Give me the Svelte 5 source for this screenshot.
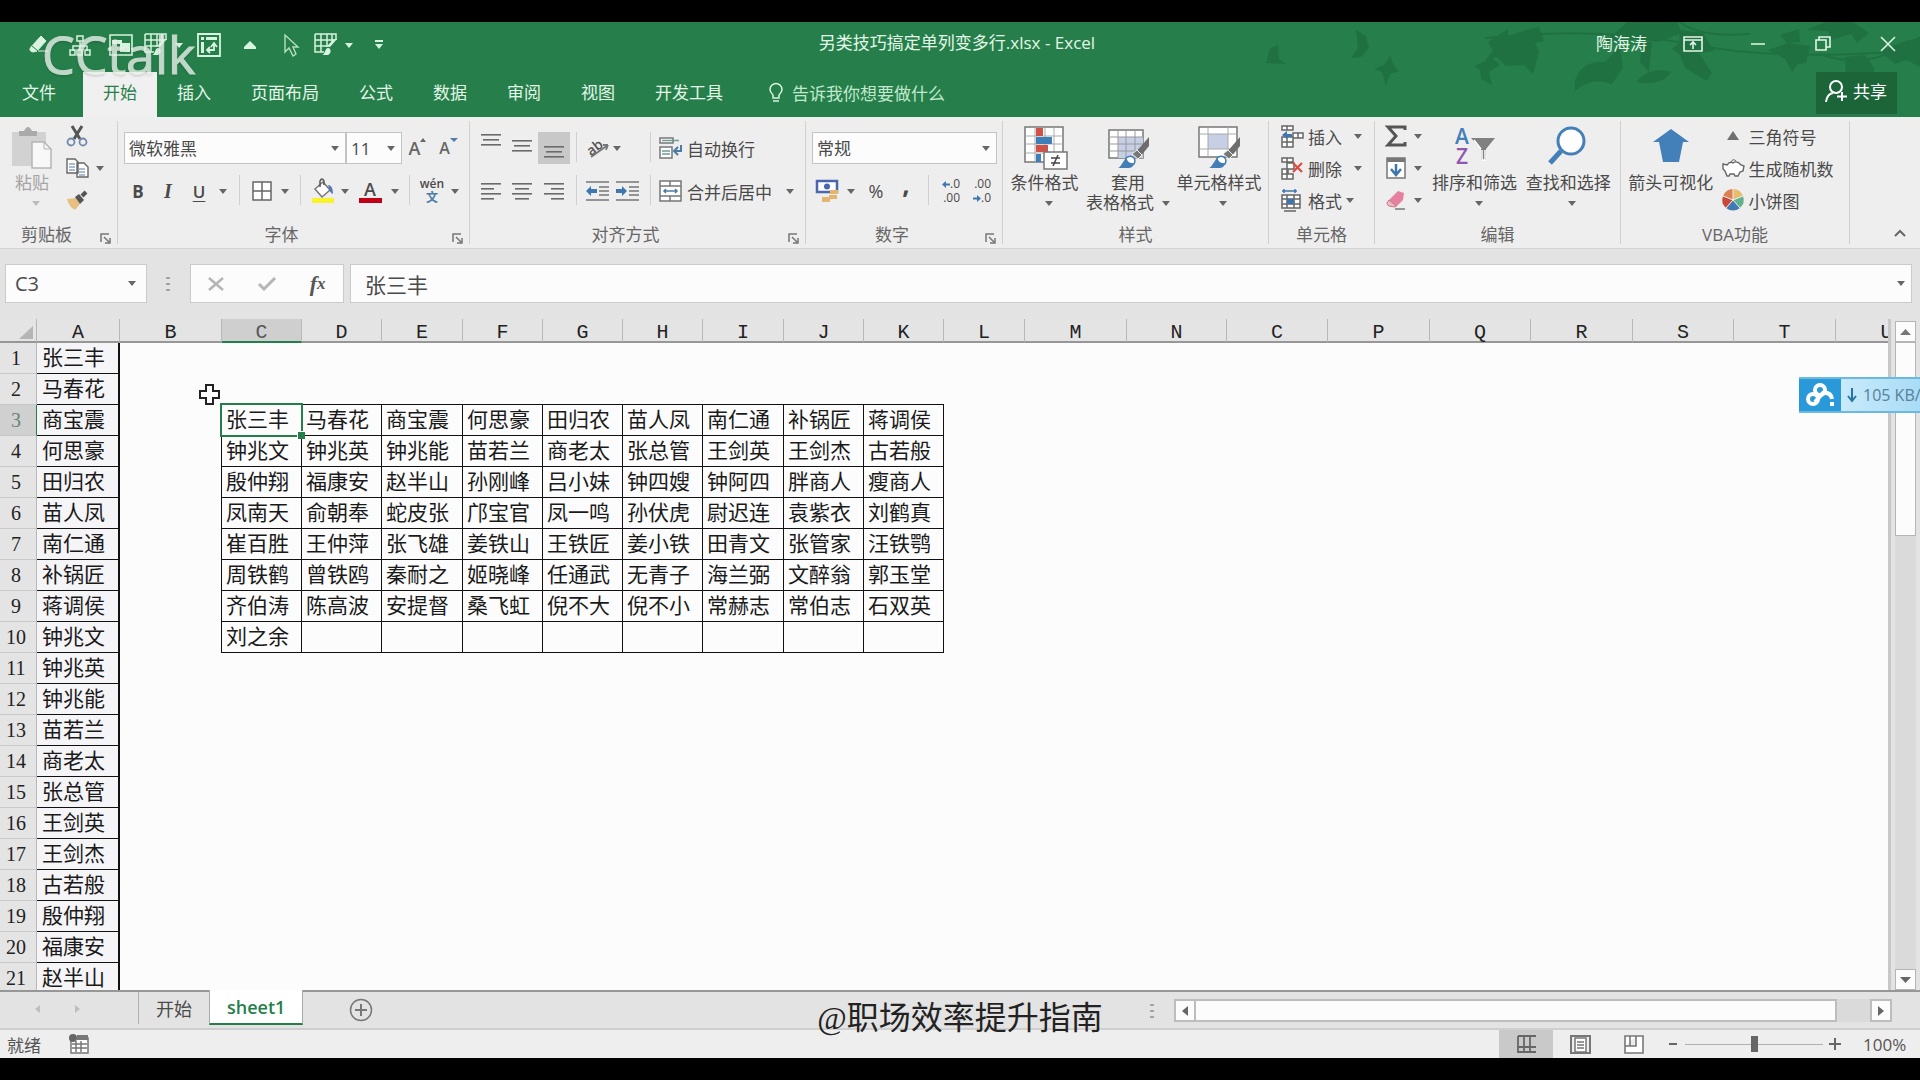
<script>
  const names = [
    '张三丰', '马春花', '商宝震', '何思豪', '田归农', '苗人凤', '南仁通', '补锅匠', '蒋调侯',
    '钟兆文', '钟兆英', '钟兆能', '苗若兰', '商老太', '张总管', '王剑英', '王剑杰', '古若般',
    '殷仲翔', '福康安', '赵半山', '孙刚峰', '吕小妹', '钟四嫂', '钟阿四', '胖商人', '瘦商人',
    '凤南天', '俞朝奉', '蛇皮张', '邝宝官', '凤一鸣', '孙伏虎', '尉迟连', '袁紫衣', '刘鹤真',
    '崔百胜', '王仲萍', '张飞雄', '姜铁山', '王铁匠', '姜小铁', '田青文', '张管家', '汪铁鹗',
    '周铁鹤', '曾铁鸥', '秦耐之', '姬晓峰', '任通武', '无青子', '海兰弼', '文醉翁', '郭玉堂',
    '齐伯涛', '陈高波', '安提督', '桑飞虹', '倪不大', '倪不小', '常赫志', '常伯志', '石双英',
    '刘之余'
  ];

  const columns = [
    { label: 'A', width: 83 }, { label: 'B', width: 102 }, { label: 'C', width: 80 },
    { label: 'D', width: 80 }, { label: 'E', width: 81 }, { label: 'F', width: 80 },
    { label: 'G', width: 80 }, { label: 'H', width: 80 }, { label: 'I', width: 81 },
    { label: 'J', width: 80 }, { label: 'K', width: 80 }, { label: 'L', width: 81 },
    { label: 'M', width: 102 }, { label: 'N', width: 100 }, { label: 'C', width: 101 },
    { label: 'P', width: 102 }, { label: 'Q', width: 101 }, { label: 'R', width: 102 },
    { label: 'S', width: 101 }, { label: 'T', width: 102 }, { label: 'U', width: 102 }
  ];

  const rowCount = 21;
  const blockTop = 2;
  const blockLeft = 2;
  const blockCols = 9;
  const blockRows = 8;

  function inBlock(row, col) {
    return row >= blockTop && row < blockTop + blockRows && col >= blockLeft && col < blockLeft + blockCols;
  }

  function cellValue(row, col) {
    if (col === 0) return names[row];
    if (!inBlock(row, col)) return '';
    return names[(row - blockTop) * blockCols + (col - blockLeft)] || '';
  }

  let selected = $state({ row: 2, col: 2 });
  let zoom = $state(100);
  let activeTab = $state('开始');

  const tabs = ['开始', '插入', '页面布局', '公式', '数据', '审阅', '视图', '开发工具'];

  let cellName = $derived(columns[selected.col].label + (selected.row + 1));
  let cellText = $derived(cellValue(selected.row, selected.col));
</script>

{#snippet caret()}
  <svg class="caret" width="8" height="5" viewBox="0 0 8 5"><path d="M0 0h8L4 5z" fill="#666" /></svg>
{/snippet}

{#snippet launcher()}
  <button class="launcher" aria-label="更多选项">
    <svg width="11" height="11" viewBox="0 0 11 11">
      <path d="M1 9V1h8M4 4l5 5M10 5v5H5" fill="none" stroke="#777" stroke-width="1.5" />
    </svg>
  </button>
{/snippet}

{#snippet lines(widths, align)}
  <svg width="20" height="18" viewBox="0 0 20 18">
    {#each widths as w, i}
      {@const x = align === 'left' ? 0 : align === 'right' ? 20 - w : (20 - w) / 2}
      <rect {x} y={1 + i * 5} width={w} height="1.6" fill="#6b6b6b" />
    {/each}
  </svg>
{/snippet}

{#snippet gridBrush(color)}
  <svg width="24" height="24" viewBox="0 0 24 24">
    <path d="M1 1h21v6M1 1v18h9M1 7h20M1 13h14M7 1v18M13 1v13M18 1v8" fill="none" stroke={color} stroke-width="1.5" />
    <path d="M23 6l-7 8-3-1 7-7zM8 22c3 0 3-7 6-7s4 5 0 7z" fill={color} />
  </svg>
{/snippet}

{#snippet bigBrush()}
  <path d="M43 11v9L34 31l-5-4z" fill="#6d6d6d" />
  <path d="M31 24l5 5-4 4-6-5z" fill="#777" stroke="#f0f0f0" />
  <path d="M12 42c4-1 6-12 13-12 7 0 4 12-2 12z" fill="#437db5" />
  <path d="M20 32c5-4 11 0 8 6-3 0-8-1-8-6z" fill="#fff" stroke="#437db5" stroke-width="1.5" />
{/snippet}

<div class="window">
  <header>
    <svg class="branches" viewBox="0 0 660 95" preserveAspectRatio="xMaxYMin meet" aria-hidden="true">
      <path d="M225 16Q340 4 430 22T660 28M420 0Q440 16 490 12M560 32Q610 50 660 15" fill="none" stroke="#1f6f41" stroke-width="2" />
      <path d="M10 26l8-3 1 14 7 5-20-1zM96 8l10 6 3 12-8 9-10 1 7-10zM130 34l4 10 5 5-9 3-4 12-4-14-8-3 10-4z" />
      <path d="M215 44l10-5 5-5 10 9-11 7 3 13-11-6-1-9zM228 20l20-13 0 7 18-6 13-3 5 14-9 2 4 9-6 22-9-9-18 1-9-9-12 4 8-10z" />
      <path d="M345 20l22-20h50l5 11-24 9-22-3zM315 58q8-20 30-18l15-16 3 22-11 16q-20-8-37 7zM376 60q15-17 35-10-8 14-35 10zM382 20h10l-3 30-9-10zM420 8l23 3 11 18-15 2 13 20-5 8-22-13-5-13-8-6 7-6z" />
      <path d="M508 28l20-7 22 3-4 17-8 1-6 8-7-13zM520 13l19-6 1 13-13 1zM546 8l20-8 27 0 16 11-12 10-6-9-20 6-3-9zM585 35l20-2 10 14-11 18-9-9-9 4zM620 29l28-11 12-1v28l-13-7-12 4z" />
    </svg>

    <div class="title-bar">
      <div class="quick">
        <button aria-label="橡皮擦">
          <svg width="22" height="22" viewBox="0 0 22 22"><path d="M3 13L13 2l5 5-9 10zM3 13q-3 4 2 5l4-1M10 17h10" fill="#d8f3df" stroke="#d8f3df" /><path d="M4 12l6 5" stroke="#267f4a" /></svg>
        </button>
        <button aria-label="层次结构">
          <svg width="24" height="24" viewBox="0 0 24 24"><path d="M9 3h6v5H9zM12 8v8M5 18v-5h14v5M2 17h5v5H2zM9 17h5v5H9zM17 17h5v5h-5z" fill="none" stroke="#d8f3df" stroke-width="1.5" /></svg>
        </button>
        <button aria-label="窗体">
          <svg width="24" height="24" viewBox="0 0 24 24"><path d="M1 2h22v20H1z" fill="none" stroke="#d8f3df" stroke-width="1.6" /><path d="M11 10h10v9H11zM3 7h10v4H3z" fill="#d8f3df" /></svg>
        </button>
        <button class="narrow" aria-label="表格样式">{@render gridBrush('#d8f3df')}</button>
        <button class="thin" aria-label="更多表格样式"><svg width="8" height="5" viewBox="0 0 8 5"><path d="M0 0h8L4 5z" fill="#d8f3df" /></svg></button>
        <button aria-label="转置">
          <svg width="24" height="24" viewBox="0 0 24 24"><path d="M1 1h22v22H1z" fill="none" stroke="#d8f3df" stroke-width="1.8" /><path d="M4 4h3v3H4zM9 4h11v3H9zM4 9h3v11H4z" fill="#d8f3df" /><path d="M11 17h6v-6M14 14l3-4 3 4M13 14l-3 3 3 3" fill="none" stroke="#d8f3df" stroke-width="1.8" /></svg>
        </button>
        <button aria-label="三角符号"><svg width="14" height="10" viewBox="0 0 14 10"><path d="M7 1l6 6v2H1V7z" fill="#d8f3df" /></svg></button>
        <button aria-label="选择"><svg width="16" height="24" viewBox="0 0 16 24"><path d="M2 2v17l4-4 4 8 3-2-3-7h5z" fill="none" stroke="#b5dfc2" stroke-width="1.4" /></svg></button>
        <button class="narrow" aria-label="表格刷">{@render gridBrush('#d8f3df')}</button>
        <button class="thin" aria-label="更多表格刷"><svg width="8" height="5" viewBox="0 0 8 5"><path d="M0 0h8L4 5z" fill="#d8f3df" /></svg></button>
        <button aria-label="自定义快速访问工具栏"><svg width="8" height="10" viewBox="0 0 8 10"><path d="M0 0h8v2H0zM0 4h8L4 9z" fill="#d8f3df" /></svg></button>
      </div>
      <h1>另类技巧搞定单列变多行.xlsx - Excel</h1>
      <div class="window-controls">
        <span class="user">陶海涛</span>
        <button aria-label="功能区显示选项"><svg width="20" height="16" viewBox="0 0 20 16"><path d="M1 1h18v14H1zM1 4h18M10 13V7M7 9l3-3 3 3" fill="none" stroke="#e4f6e8" stroke-width="1.6" /></svg></button>
        <button aria-label="最小化"><svg width="16" height="16" viewBox="0 0 16 16"><path d="M1 8h14" stroke="#e4f6e8" stroke-width="1.5" /></svg></button>
        <button aria-label="还原"><svg width="16" height="16" viewBox="0 0 16 16"><path d="M1 4h10v10H1zM4 4V1h11v10h-4" fill="none" stroke="#e4f6e8" stroke-width="1.6" /></svg></button>
        <button aria-label="关闭"><svg width="16" height="16" viewBox="0 0 16 16"><path d="M1 1l14 14M15 1L1 15" stroke="#e4f6e8" stroke-width="1.5" /></svg></button>
      </div>
      <span class="brand">CCtalk</span>
    </div>

    <nav>
      <button class="tab file">文件</button>
      {#each tabs as tab}
        <button class="tab" class:active={activeTab === tab} onclick={() => (activeTab = tab)}>{tab}</button>
      {/each}
      <button class="tell-me">
        <svg width="14" height="20" viewBox="0 0 14 20"><path d="M4 15v-3Q1 9 1 6.500a6 6 0 0 1 12 0Q13 9 10 12v3zM4 18h6" fill="none" stroke="#d8f3df" stroke-width="1.5" /></svg>
        告诉我你想要做什么
      </button>
      <button class="share">
        <svg width="23" height="24" viewBox="0 0 23 24"><circle cx="11" cy="8" r="6" fill="none" stroke="#fff" stroke-width="2" /><path d="M1 23q1-8 7-9M17 13v9M12 17.500h10" fill="none" stroke="#fff" stroke-width="2" /></svg>
        共享
      </button>
    </nav>
  </header>

  <div class="ribbon">
    <section class="group">
      <div class="body clipboard">
        <button class="big disabled">
          <svg width="42" height="44" viewBox="0 0 42 44">
            <path d="M1 6h34v34H1z" fill="#d2d2d2" /><path d="M8 10V5h5q4-8 8 0h5v5z" fill="#aaa" />
            <path d="M21 16h12l7 7v19H21z" fill="#f8f8f8" stroke="#b5b5b5" stroke-width="1.5" /><path d="M33 16v7h7" fill="none" stroke="#b5b5b5" />
          </svg>
          <span>粘贴</span>
          <svg class="caret" width="8" height="5" viewBox="0 0 8 5"><path d="M0 0h8L4 5z" fill="#bbb" /></svg>
        </button>
        <div class="stack">
          <button aria-label="剪切"><svg width="22" height="22" viewBox="0 0 22 22"><path d="M6 1l8 13M16 1L8 14" stroke="#555" stroke-width="3" /><circle cx="5" cy="17" r="3.500" fill="none" stroke="#7089ac" stroke-width="1.8" /><circle cx="17" cy="17" r="3.500" fill="none" stroke="#7089ac" stroke-width="1.8" /></svg></button>
          <button aria-label="复制"><svg width="23" height="20" viewBox="0 0 23 20"><path d="M1 1h8l3 3v11H1zM11 5h7l4 4v10H11z" fill="#fff" stroke="#666" stroke-width="1.4" /><path d="M3 6h6M3 9h6M3 12h6M13 11h6M13 14h6M13 17h6" stroke="#4d7ba8" /></svg>{@render caret()}</button>
          <button aria-label="格式刷"><svg width="22" height="20" viewBox="0 0 22 20"><path d="M1 9l9-1 4 6-5 6q-6-3-8-11z" fill="#e7bf80" /><path d="M9 7l4-3 5 6-4 4z" fill="#555" /><path d="M16 6l4-4" stroke="#555" stroke-width="4" /></svg></button>
        </div>
      </div>
      <footer><span>剪贴板</span>{@render launcher()}</footer>
    </section>

    <section class="group">
      <div class="body rows">
        <div class="row combos">
          <span class="combo"><select aria-label="字体"><option>微软雅黑</option></select>{@render caret()}</span>
          <span class="combo small"><select aria-label="字号"><option>11</option></select>{@render caret()}</span>
          <button class="glyph-a" aria-label="增大字号">A<svg width="6" height="4" viewBox="0 0 6 4"><path d="M0 4h6L3 0z" fill="#666" /></svg></button>
          <button class="glyph-a less" aria-label="减小字号">A<svg width="8" height="4" viewBox="0 0 8 4"><path d="M0 0h8L4 4z" fill="#4f7fa3" /></svg></button>
        </div>
        <div class="row font-row">
          <button class="bold">B</button>
          <button class="italic">I</button>
          <button class="underline">U</button>
          <button aria-label="下划线样式">{@render caret()}</button>
          <i class="divider"></i>
          <button aria-label="边框"><svg width="20" height="20" viewBox="0 0 20 20"><path d="M1 1h18v18H1zM1 10h18M10 1v18" fill="#fff" stroke="#666" stroke-width="1.5" /></svg></button>
          <button aria-label="更多边框">{@render caret()}</button>
          <i class="divider"></i>
          <button aria-label="填充颜色"><svg width="24" height="26" viewBox="0 0 24 26"><path d="M4 11l8-7 7 8-8 7z" fill="#fff" stroke="#777" stroke-width="1.500" /><path d="M9 9V3q2-4 4 0v4" fill="none" stroke="#555" stroke-width="1.500" /><path d="M17 7q5 0 5 9-4-2-4-6z" fill="#5579b5" /><path d="M1 20h22v5H1z" fill="#f8f32b" /></svg></button>
          <button aria-label="更多填充颜色">{@render caret()}</button>
          <button aria-label="字体颜色" class="font-color">A</button>
          <button aria-label="更多字体颜色">{@render caret()}</button>
          <i class="divider"></i>
          <button class="pinyin" aria-label="拼音"><small>wén</small><b>文</b></button>
          <button aria-label="更多拼音选项">{@render caret()}</button>
        </div>
      </div>
      <footer><span>字体</span>{@render launcher()}</footer>
    </section>

    <section class="group">
      <div class="body rows">
        <div class="row align-row">
          <button class="raise" aria-label="顶端对齐">{@render lines([20, 16, 20], 'center')}</button>
          <button aria-label="垂直居中">{@render lines([20, 16, 20], 'center')}</button>
          <button class="pressed" aria-label="底端对齐">{@render lines([20, 16, 20], 'center')}</button>
          <i class="divider"></i>
          <button aria-label="方向"><svg width="24" height="22" viewBox="0 0 24 22"><path d="M5 20L22 8M22 8l-5 0M22 8l-2 5" fill="none" stroke="#777" stroke-width="1.800" /><text x="1" y="16" class="orient" transform="rotate(-38 8 12)">ab</text></svg></button>
          <button class="from-start" aria-label="更多方向">{@render caret()}</button>
          <i class="divider"></i>
          <button class="labelled">
            <svg width="24" height="22" viewBox="0 0 24 22"><path d="M1 1h13v5H1zM1 10h12v11H1z" fill="#fff" stroke="#777" stroke-width="1.5" /><path d="M3 3.500h17M3 14h8M3 17h8" stroke="#6d9a9a" stroke-width="1.5" /><path d="M22 8v6h-6M19 10l-4 4 4 4" fill="none" stroke="#4d7ba8" stroke-width="2" /></svg>
            自动换行
          </button>
        </div>
        <div class="row align-row">
          <button aria-label="左对齐">{@render lines([20, 13, 20, 13], 'left')}</button>
          <button aria-label="居中">{@render lines([20, 14, 20, 14], 'center')}</button>
          <button aria-label="右对齐">{@render lines([20, 13, 20, 13], 'right')}</button>
          <i class="divider"></i>
          <button aria-label="减少缩进"><svg width="23" height="20" viewBox="0 0 23 20"><path d="M0 1h23M13 6h10M13 10h10M13 14h10M0 19h23" stroke="#777" stroke-width="1.5" /><path d="M0 10l5-5v3h6v4H5v3z" fill="#3f76ad" /></svg></button>
          <button aria-label="增加缩进"><svg width="23" height="20" viewBox="0 0 23 20"><path d="M0 1h23M13 6h10M13 10h10M13 14h10M0 19h23" stroke="#777" stroke-width="1.5" /><path d="M11 10L6 5v3H0v4h6v3z" fill="#3f76ad" /></svg></button>
          <i class="divider"></i>
          <button class="labelled">
            <svg width="24" height="22" viewBox="0 0 24 22"><path d="M1 1h21v20H1zM1 6h21M1 16h21M11 1v5M11 16v5" fill="#fff" stroke="#777" stroke-width="1.5" /><path d="M5 11h13M7 9l-2 2 2 2M16 9l2 2-2 2" fill="none" stroke="#4d7ba8" stroke-width="1.5" /></svg>
            合并后居中
            {@render caret()}
          </button>
        </div>
      </div>
      <footer><span>对齐方式</span>{@render launcher()}</footer>
    </section>

    <section class="group">
      <div class="body rows">
        <div class="row combos">
          <span class="combo"><select aria-label="数字格式"><option>常规</option></select>{@render caret()}</span>
        </div>
        <div class="row number-row">
          <button aria-label="会计数字格式"><svg width="24" height="24" viewBox="0 0 24 24"><path d="M2 2h20v11H2z" fill="#fff" stroke="#4867ac" stroke-width="2.500" /><circle cx="12" cy="7.500" r="3" fill="#4867ac" /><path d="M15 11h8v4h-8zM14 16h8v4h-8zM7 18h8v5H7z" fill="#e5b56f" /></svg></button>
          <button aria-label="更多会计格式">{@render caret()}</button>
          <button class="percent">%</button>
          <button class="comma" aria-label="千位分隔样式">,</button>
          <i class="divider"></i>
          <button class="decimals" aria-label="增加小数位数"><span><svg width="8" height="7" viewBox="0 0 8 7"><path d="M0 3.500L4 0v2.500h4v2H4V7z" fill="#3f76ad" /></svg>.0</span><span>.00</span></button>
          <button class="decimals" aria-label="减少小数位数"><span>.00</span><span><svg width="8" height="7" viewBox="0 0 8 7"><path d="M8 3.500L4 0v2.500H0v2h4V7z" fill="#3f76ad" /></svg>.0</span></button>
        </div>
      </div>
      <footer><span>数字</span>{@render launcher()}</footer>
    </section>

    <section class="group">
      <div class="body styles">
        <button class="big">
          <svg width="44" height="44" viewBox="0 0 44 44">
            <path d="M2 1h38v35H2z" fill="#fff" stroke="#777" stroke-width="1.5" /><path d="M2 10h38M2 18h38M2 27h38M12 1v35M22 1v35M31 1v35" stroke="#aaa" />
            <path d="M13 2h7v8h-7zM13 19h12v7H13z" fill="#cf5148" /><path d="M13 11h16v7H13zM13 28h5v8h-5z" fill="#3f7fb8" />
            <path d="M21 26h23v17H21z" fill="#fff" stroke="#777" stroke-width="1.5" /><path d="M28 32h9M28 37h9M35 29l-5 11" stroke="#444" stroke-width="1.5" />
          </svg>
          <span>条件格式</span>
          {@render caret()}
        </button>
        <button class="big">
          <svg width="44" height="44" viewBox="0 0 44 44">
            <path d="M3 4h34v28H3z" fill="#fff" stroke="#777" stroke-width="1.5" /><path d="M12 11h25v21H12z" fill="#c6cfe6" /><path d="M3 11h34M3 18h34M3 25h34M12 4v28M20 4v28M29 4v28" stroke="#999" />
            {@render bigBrush()}
          </svg>
          <span>套用</span>
          <span class="second">表格格式 {@render caret()}</span>
        </button>
        <button class="big">
          <svg width="44" height="44" viewBox="0 0 44 44">
            <path d="M2 1h38v30H2z" fill="#fff" stroke="#777" stroke-width="1.5" /><path d="M11 8h20v15H11z" fill="#c6cfe6" /><path d="M2 8h38M2 23h38M11 1v30M31 1v30" stroke="#aaa" />
            {@render bigBrush()}
          </svg>
          <span>单元格样式</span>
          {@render caret()}
        </button>
      </div>
      <footer><span>样式</span></footer>
    </section>

    <section class="group">
      <div class="body stack cells">
        <button>
          <svg width="23" height="23" viewBox="0 0 23 23"><path d="M1 1h11v4H1zM1 17h11v5H1zM1 17v-5h11v5M6 1v4M6 12v10M12 8h10v5H12zM17 8v5" fill="#fff" stroke="#666" stroke-width="1.500" /><path d="M1 10l5-4v3h5v3H6v2z" fill="#3f76ad" /></svg>
          <span>插入</span>{@render caret()}
        </button>
        <button>
          <svg width="23" height="23" viewBox="0 0 23 23"><path d="M1 1h11v4H1zM1 17h11v5H1zM1 17v-5h6v5M6 1v4M6 12v10M6 6h7v6H6z" fill="#fff" stroke="#666" stroke-width="1.500" /><path d="M12 6l9 9M21 6l-9 9" stroke="#dc4c3f" stroke-width="2.200" /></svg>
          <span>删除</span>{@render caret()}
        </button>
        <button class="tight">
          <svg width="23" height="23" viewBox="0 0 23 23"><path d="M1 6h18v13H1zM1 10h18M1 15h18M6 6v13M13 6v13M3 22h12" fill="#fff" stroke="#666" stroke-width="1.500" /><path d="M6 10h7v5H6z" fill="#3f76ad" /><path d="M1 2h15M3 0v4M14 0v4" stroke="#3f76ad" stroke-width="1.500" /></svg>
          <span>格式</span>{@render caret()}
        </button>
      </div>
      <footer><span>单元格</span></footer>
    </section>

    <section class="group">
      <div class="body editing">
        <div class="stack">
          <button aria-label="自动求和"><svg width="20" height="22" viewBox="0 0 20 22"><path d="M19 5V2H2l8 9-8 9h17v-3" fill="none" stroke="#555" stroke-width="3" /></svg>{@render caret()}</button>
          <button aria-label="填充"><svg width="20" height="22" viewBox="0 0 20 22"><path d="M1 1h18v20H1z" fill="#fff" stroke="#777" stroke-width="1.5" /><path d="M1 1h18v4H1z" fill="#777" /><path d="M10 7v10M5 12l5 6 5-6" fill="none" stroke="#3f76ad" stroke-width="2.5" /></svg>{@render caret()}</button>
          <button aria-label="清除"><svg width="20" height="20" viewBox="0 0 20 20"><path d="M3 10L12 1l6 2-1 7-7 7z" fill="#e5809f" /><path d="M3 10q-4 4 0 6l6 1 1-1z" fill="#f0b8c8" stroke="#c77" /><path d="M9 19h10" stroke="#777" stroke-width="1.5" /></svg>{@render caret()}</button>
        </div>
        <button class="big">
          <svg width="44" height="44" viewBox="0 0 44 44">
            <text x="2" y="18" class="sort-a">A</text><text x="3" y="38" class="sort-z">Z</text>
            <path d="M18 12h24l-9 11v11h-5V23z" fill="#808080" /><path d="M28 23l-7-9M29 24v10h3V24" fill="none" stroke="#fff" stroke-width="1.500" />
          </svg>
          <span>排序和筛选</span>
          {@render caret()}
        </button>
        <button class="big">
          <svg width="44" height="44" viewBox="0 0 44 44"><circle cx="25" cy="15" r="13" fill="#fff" stroke="#4380b8" stroke-width="3" /><path d="M15 25L4 37" stroke="#4380b8" stroke-width="5" /></svg>
          <span>查找和选择</span>
          {@render caret()}
        </button>
      </div>
      <footer><span>编辑</span></footer>
    </section>

    <section class="group">
      <div class="body vba">
        <button class="big">
          <svg width="44" height="44" viewBox="0 0 44 44"><path d="M22 3l18 13h-6l-4 20H14l-4-20H4z" fill="#437fb8" /></svg>
          <span>箭头可视化</span>
        </button>
        <div class="stack">
          <button><svg width="24" height="22" viewBox="0 0 24 22"><path d="M12 6l6 9H6z" fill="#707070" /></svg><span>三角符号</span></button>
          <button><svg width="24" height="22" viewBox="0 0 24 22"><path d="M2 7l4 1q3-4 6-2 4-3 8 2l3 1-1 5-3 1-2 4h-3l-1-2H9l-1 2H6l-2-5-2-2z" fill="#fff" stroke="#666" stroke-width="1.400" /><path d="M10 5q2-4 5-1" fill="none" stroke="#666" /></svg><span>生成随机数</span></button>
          <button><svg width="24" height="22" viewBox="0 0 24 22"><path d="M12 11V0a11 11 0 0 1 10 7z" fill="#e9bd6d" /><path d="M12 11l10-4a11 11 0 0 1-3 12z" fill="#61b28c" /><path d="M12 11l7 8q-7 5-14 0z" fill="#4179b2" /><path d="M12 11l-7 8A11 11 0 0 1 2 7z" fill="#c9483a" /><path d="M12 11L2 7q3-7 10-7z" fill="#db8055" /><path d="M12 11V0M12 11l10-4M12 11l7 8M12 11l-7 8M12 11L2 7" stroke="#eee" /></svg><span>小饼图</span></button>
        </div>
      </div>
      <footer><span>VBA功能</span></footer>
    </section>

    <section class="group last">
      <div class="body"></div>
      <footer>
        <button class="collapse" aria-label="折叠功能区"><svg width="12" height="8" viewBox="0 0 12 8"><path d="M1 7l5-5 5 5" fill="none" stroke="#666" stroke-width="2" /></svg></button>
      </footer>
    </section>
  </div>

  <div class="formula-bar">
    <span class="name-box"><input aria-label="名称框" value={cellName} />{@render caret()}</span>
    <i class="grip"></i>
    <div class="formula-buttons">
      <button aria-label="取消"><svg width="16" height="14" viewBox="0 0 16 14"><path d="M1 1l14 12M15 1L1 13" stroke="#b5b5b5" stroke-width="2.500" /></svg></button>
      <button aria-label="输入"><svg width="18" height="14" viewBox="0 0 18 14"><path d="M1 7l5 5L17 1" fill="none" stroke="#b5b5b5" stroke-width="3" /></svg></button>
      <button class="fx" aria-label="插入函数">f<small>x</small></button>
    </div>
    <span class="formula"><input aria-label="编辑栏" value={cellText} />{@render caret()}</span>
  </div>

  <main>
    <div class="sheet">
      <table>
        <colgroup>
          <col style:width="37px" />
          {#each columns as column}
            <col style:width="{column.width}px" />
          {/each}
        </colgroup>
        <thead>
          <tr>
            <th class="corner"><svg width="14" height="13" viewBox="0 0 14 13"><path d="M14 0v13H0z" fill="#b5b5b5" /></svg></th>
            {#each columns as column, c}
              <th class:current={selected.col === c}>{column.label}</th>
            {/each}
          </tr>
        </thead>
        <tbody>
          {#each { length: rowCount } as _, r}
            <tr>
              <th class:current={selected.row === r}>{r + 1}</th>
              {#each columns as _, c}
                <td
                  class:filled={c === 0 || inBlock(r, c)}
                  class:first-col={c === 0}
                  class:above={r === blockTop - 1 && inBlock(blockTop, c)}
                  class:before={c === blockLeft - 1 && inBlock(r, blockLeft)}
                  class:selected={selected.row === r && selected.col === c}
                  onclick={() => (selected = { row: r, col: c })}
                >{cellValue(r, c)}</td>
              {/each}
            </tr>
          {/each}
        </tbody>
      </table>
      <svg class="cross" width="23" height="23" viewBox="0 0 23 23"><path d="M8 2h7v6h6v7h-6v6H8v-6H2V8h6z" fill="#fff" stroke="#222" stroke-width="2" /></svg>
    </div>
    <div class="v-scroll">
      <button aria-label="向上滚动"><svg width="11" height="6" viewBox="0 0 11 6"><path d="M0 6h11L5.500 0z" fill="#777" /></svg></button>
      <i class="thumb"></i>
      <button class="end" aria-label="向下滚动"><svg width="11" height="6" viewBox="0 0 11 6"><path d="M0 0h11L5.500 6z" fill="#666" /></svg></button>
    </div>
    <div class="transfer">
      <span class="cloud"><svg width="30" height="24" viewBox="0 0 30 24"><g fill="none" stroke="#fff" stroke-width="4"><circle cx="8" cy="16" r="5" /><circle cx="15" cy="7" r="5" /><path d="M10 19l8-9q8-1 9 6" /></g><path d="M25 19h4v4h-4z" fill="#fff" /></svg></span>
      <svg width="10" height="14" viewBox="0 0 10 14"><path d="M5 0v12M1 8l4 5 4-5" fill="none" stroke="#26759e" stroke-width="2" /></svg>
      <span class="speed">105 KB/s</span>
    </div>
  </main>

  <div class="sheet-tabs">
    <button class="arrow" aria-label="上一个工作表"><svg width="6" height="8" viewBox="0 0 6 8"><path d="M5 0v8L0 4z" fill="#bdbdbd" /></svg></button>
    <button class="arrow" aria-label="下一个工作表"><svg width="6" height="8" viewBox="0 0 6 8"><path d="M0 0v8l5-4z" fill="#bdbdbd" /></svg></button>
    <button class="sheet-tab">开始</button>
    <button class="sheet-tab active">sheet1</button>
    <button class="add" aria-label="新工作表"><svg width="24" height="24" viewBox="0 0 24 24"><circle cx="12" cy="12" r="10.500" fill="none" stroke="#777" stroke-width="1.500" /><path d="M12 6v12M6 12h12" stroke="#777" stroke-width="2" /></svg></button>
    <div class="h-area">
      <i class="grip"></i>
      <div class="h-scroll">
        <button aria-label="向左滚动"><svg width="6" height="10" viewBox="0 0 6 10"><path d="M6 0v10L0 5z" fill="#666" /></svg></button>
        <i class="thumb"></i>
        <button aria-label="向右滚动"><svg width="6" height="10" viewBox="0 0 6 10"><path d="M0 0v10l6-5z" fill="#666" /></svg></button>
      </div>
    </div>
    <span class="credit">@职场效率提升指南</span>
  </div>

  <div class="status">
    <span class="ready">就绪</span>
    <button class="macro" aria-label="录制宏"><svg width="20" height="20" viewBox="0 0 20 20"><path d="M2 4h17v15H2z" fill="#fff" stroke="#777" stroke-width="1.500" /><path d="M8 1h11v5H8z" fill="#777" /><circle cx="4" cy="4" r="4" fill="#666" /><path d="M3 10h15M3 14h15M7 7v11M12 7v11" stroke="#777" stroke-width="1.500" /></svg></button>
    <div class="views">
      <button class="on" aria-label="普通"><svg width="19" height="19" viewBox="0 0 19 19"><path d="M1 1v17M7 1v17M13 1v17M0 12h19M1 1h18M1 17h18" fill="none" stroke="#666" stroke-width="1.800" /></svg></button>
      <button aria-label="页面布局"><svg width="21" height="19" viewBox="0 0 21 19"><path d="M1 1h19v17H1z" fill="none" stroke="#777" stroke-width="2" /><path d="M5 3h11v14H5zM7 7h7M7 10h7M7 13h7" fill="#fff" stroke="#777" stroke-width="1.500" /></svg></button>
      <button aria-label="分页预览"><svg width="20" height="19" viewBox="0 0 20 19"><path d="M1 1h18v17H1zM1 11h11V1M6 1v10" fill="#fff" stroke="#777" stroke-width="1.600" /></svg></button>
    </div>
    <button class="step" aria-label="缩小"><svg width="8" height="12" viewBox="0 0 8 12"><path d="M0 6h8" stroke="#666" stroke-width="2" /></svg></button>
    <input type="range" min="0" max="200" bind:value={zoom} aria-label="缩放" />
    <button class="step" aria-label="放大"><svg width="12" height="12" viewBox="0 0 12 12"><path d="M0 6h12M6 0v12" stroke="#666" stroke-width="2" /></svg></button>
    <span class="zoom">{zoom}%</span>
  </div>
</div>

<style>
  :global(body) {
    background: #000;
    overflow: hidden;
  }

  * {
    box-sizing: border-box;
  }

  .window {
    height: 100vh;
    padding: 22px 0;
    display: flex;
    flex-direction: column;
    font-family: 'Open Sans', 'Noto Sans CJK SC', sans-serif;
    font-size: 17px;
    color: #4a4a4a;
  }

  button {
    display: flex;
    align-items: center;
    justify-content: center;
    padding: 0;
    border: none;
    background: none;
    font: inherit;
    color: inherit;
    white-space: nowrap;
    cursor: pointer;
  }

  svg {
    flex: none;
    display: block;
    overflow: visible;
  }

  /* title bar and tabs */
  header {
    position: relative;
    background: #267f4a;
    color: #e4f6e8;
  }

  .branches {
    position: absolute;
    top: 0;
    right: 0;
    height: 100%;
    overflow: hidden;
    fill: #1f6f41;
    opacity: 0.85;
  }

  .title-bar {
    position: relative;
    display: grid;
    grid-template-columns: 1fr auto 1fr;
    align-items: center;
    height: 50px;
    padding-bottom: 6px;
  }

  .quick {
    display: flex;
    align-items: center;
    padding: 2px 0 0 18px;
  }

  .quick button {
    width: 41px;
  }

  .quick .narrow {
    width: 29px;
  }

  .quick .thin {
    width: 18px;
  }

  .brand {
    position: absolute;
    left: 42px;
    top: 2px;
    font-size: 52px;
    line-height: 60px;
    color: #e8efe9;
    opacity: 0.8;
    -webkit-text-stroke: 1px #e8efe9;
    text-shadow: 0 1px 3px rgba(0, 0, 0, 0.3);
    pointer-events: none;
    z-index: 1;
  }

  h1 {
    margin: 0;
    padding: 0 6px 2px 0;
    font-size: 17px;
    font-weight: 400;
    line-height: 24px;
  }

  .window-controls {
    display: flex;
    justify-content: flex-end;
  }

  .window-controls button {
    width: 65px;
  }

  .user {
    padding-right: 13px;
    line-height: 24px;
  }

  nav {
    position: relative;
    display: flex;
    align-items: stretch;
    height: 45px;
  }

  .tab {
    padding: 0 20px 6px;
  }

  .file {
    margin: 0 7px 0 2px;
  }

  .tab.active {
    background: #f1f0f0;
    color: #267f4a;
  }

  .tell-me {
    gap: 9px;
    padding: 0 0 4px 26px;
    color: #c2e8cd;
  }

  .share {
    gap: 5px;
    margin: 0 23px 3px auto;
    padding: 0 10px 5px 9px;
    background: #1b6538;
    color: #fff;
  }

  /* ribbon */
  .ribbon {
    display: grid;
    grid-template-columns: 118fr 352fr 336fr 197fr 266fr 106fr 246fr 229fr 70fr;
    padding: 4px 0;
    background: #efeeee;
    border-bottom: 1px solid #d4d4d4;
  }

  .group {
    min-width: 0;
    border-right: 1px solid #d0d0d0;
    display: flex;
    flex-direction: column;
  }

  .group.last {
    border: none;
  }

  .body {
    height: 101px;
  }

  .group footer {
    display: flex;
    align-items: center;
    height: 22px;
    color: #666;
  }

  .group footer span {
    flex: 1;
    text-align: center;
  }

  .launcher {
    width: 24px;
    height: 12px;
    align-self: flex-end;
  }

  .collapse {
    margin: 0 14px 0 auto;
  }

  .rows {
    display: flex;
    flex-direction: column;
    gap: 11px;
    padding: 11px 5px 0 6px;
  }

  .row {
    height: 32px;
  }

  .row button {
    height: 32px;
  }

  .combos {
    display: flex;
  }

  .combo {
    position: relative;
    display: flex;
    flex: 1;
  }

  .combo.small {
    flex: none;
    width: 56px;
  }

  .combo .caret {
    position: absolute;
    right: 7px;
    top: 14px;
    pointer-events: none;
  }

  select {
    appearance: none;
    width: 100%;
    padding: 0 4px;
    border: 1px solid #c3c3c3;
    border-radius: 0;
    background: #fcfcfc;
    color: #4a4a4a;
    font: inherit;
  }

  .glyph-a {
    width: 31px;
    font-size: 18px;
    font-weight: 600;
    color: #666;
  }

  .glyph-a svg {
    align-self: flex-start;
    margin-top: 6px;
  }

  .glyph-a.less {
    font-size: 16px;
  }

  .font-row {
    display: grid;
    grid-template-columns: 28px 32px 30px 18px 14px 32px 14px 16px 30px 14px 36px 14px 14px 32px 14px;
  }

  .divider {
    justify-self: center;
    width: 1px;
    height: 30px;
    background: #d0d0d0;
  }

  .bold {
    font-weight: 700;
  }

  .italic {
    font-family: 'Liberation Serif', serif;
    font-size: 20px;
    font-style: italic;
    font-weight: 700;
  }

  .underline {
    font-weight: 600;
    text-decoration: underline;
    text-underline-offset: 3px;
  }

  .row .font-color {
    align-self: center;
    justify-self: center;
    width: 23px;
    height: 24px;
    border-bottom: 5px solid #c00018;
    font-size: 18px;
    font-weight: 600;
  }

  .pinyin {
    flex-direction: column;
    font-size: 12px;
  }

  .pinyin small {
    font-size: 12px;
    font-weight: 600;
    line-height: 14px;
  }

  .pinyin b {
    color: #4d7ba8;
    line-height: 14px;
  }

  .align-row {
    display: grid;
    grid-template-columns: 30px 32px 32px 12px 31px 28px 18px 1fr;
  }

  .raise {
    padding-bottom: 12px;
  }

  .pressed {
    padding-top: 12px;
    background: #c9c8c8;
  }

  .row .from-start {
    justify-content: flex-start;
  }

  .orient {
    font-size: 14px;
    font-weight: 600;
    fill: #555;
  }

  .row .labelled {
    justify-content: flex-start;
    gap: 4px;
  }

  .labelled .caret {
    margin-left: 10px;
  }

  .number-row {
    display: grid;
    grid-template-columns: 30px 18px 32px 28px 16px 24px 31px;
  }

  .percent {
    font-size: 18px;
  }

  .comma {
    padding-bottom: 14px;
    font-size: 26px;
    font-weight: 700;
  }

  .decimals {
    flex-direction: column;
    align-items: flex-end;
    font-size: 12px;
    line-height: 14px;
  }

  .decimals span {
    display: flex;
    align-items: center;
  }

  .big {
    flex-direction: column;
    justify-content: flex-start;
    padding-top: 5px;
    line-height: 25px;
  }

  .big .caret {
    margin: 6px 0 0 8px;
  }

  .big .second {
    display: flex;
    align-items: center;
    line-height: 16px;
  }

  .second .caret {
    margin-top: 0;
  }

  .disabled {
    color: #a5a5a5;
  }

  .clipboard {
    display: grid;
    grid-template-columns: 52px 1fr;
    padding-left: 6px;
  }

  .stack {
    display: flex;
    flex-direction: column;
  }

  .stack button {
    height: 32px;
    justify-content: flex-start;
    gap: 4px;
    padding-bottom: 2px;
  }

  .clipboard .stack {
    padding-left: 8px;
  }

  .clipboard .stack button {
    gap: 7px;
  }

  .styles {
    display: grid;
    grid-template-columns: 84fr 82fr 99fr;
  }

  .cells {
    padding-left: 12px;
  }

  .cells .caret {
    margin-left: 8px;
  }

  .cells .tight .caret {
    margin-left: 0;
  }

  .editing {
    display: grid;
    grid-template-columns: 52fr 96fr 92fr 6fr;
  }

  .editing .stack {
    padding-left: 11px;
  }

  .editing .stack button {
    gap: 8px;
  }

  .sort-a,
  .sort-z {
    font-size: 21px;
    font-weight: 600;
    fill: #4380b8;
  }

  .sort-z {
    fill: #9057b0;
  }

  .vba {
    display: grid;
    grid-template-columns: 100fr 129fr;
  }

  /* formula bar */
  .formula-bar {
    display: flex;
    align-items: center;
    padding: 15px 8px 16px 5px;
    background: #e3e3e3;
  }

  .name-box,
  .formula,
  .formula-buttons {
    display: flex;
    align-items: center;
    height: 39px;
    border: 1px solid #cbcbcb;
    background: #fcfcfc;
  }

  .name-box {
    width: 142px;
    padding-right: 10px;
  }

  .formula-bar input {
    flex: 1;
    min-width: 0;
    padding: 0 0 0 9px;
    border: none;
    background: none;
    color: #4a4a4a;
    font: inherit;
    font-size: 20px;
    outline: none;
  }

  .grip {
    width: 4px;
    height: 14px;
    background: repeating-linear-gradient(#a5a5a5 0 2px, transparent 2px 6px);
  }

  .formula-bar .grip {
    margin: 0 20px 0 19px;
  }

  .formula-buttons {
    justify-content: space-around;
    width: 154px;
    margin-right: 6px;
  }

  .formula-buttons button {
    width: 40px;
  }

  .fx {
    color: #555;
    font-family: 'Liberation Serif', serif;
    font-size: 22px;
    font-style: italic;
    font-weight: 700;
  }

  .fx small {
    font-size: 17px;
  }

  .formula {
    flex: 1;
    padding-right: 6px;
  }

  .formula-bar .formula input {
    padding-left: 14px;
    font-size: 21px;
  }

  /* worksheet */
  main {
    position: relative;
    display: flex;
    flex: 1;
    min-height: 0;
    background: #e3e3e3;
  }

  .sheet {
    position: relative;
    flex: 1;
    min-width: 0;
    overflow: hidden;
    background: #fcfcfc;
    border-right: 3px solid #c8c8c8;
  }

  table {
    width: 1918px;
    table-layout: fixed;
    border-collapse: separate;
    border-spacing: 0;
  }

  th {
    padding: 0;
    height: 31px;
    border-right: 1px solid #b8b8b8;
    border-bottom: 1px solid #c8c8c8;
    background: #e4e4e4;
    color: #222;
    font-family: 'Liberation Serif', serif;
    font-size: 20px;
    font-weight: 400;
  }

  thead th {
    height: 24px;
    padding-top: 5px;
    border-bottom: 2px solid #979797;
    font-family: 'Liberation Mono', monospace;
    line-height: 17px;
  }

  tbody th {
    padding-right: 4px;
  }

  thead th.current {
    background: #cfcfcf;
    border-bottom-color: #267f4a;
    color: #555;
  }

  tbody th.current {
    background: #d0d0d0;
    border-right-color: #267f4a;
    color: #6a8474;
  }

  .corner svg {
    margin: 0 0 0 19px;
  }

  td {
    position: relative;
    height: 31px;
    padding: 0 0 2px 4px;
    color: #1a1a1a;
    font-size: 21px;
    line-height: 28px;
    white-space: nowrap;
    cursor: cell;
  }

  td.filled {
    border-right: 1px solid #111;
    border-bottom: 1px solid #111;
  }

  td.first-col {
    padding-left: 5px;
    background: #f5f4f7;
    border-right-width: 2px;
  }

  td.above {
    border-bottom: 1px solid #111;
  }

  td.before {
    border-right: 1px solid #111;
  }

  td.selected::before {
    content: '';
    position: absolute;
    inset: -2px;
    border: 2px solid #267f4a;
    z-index: 1;
  }

  td.selected::after {
    content: '';
    position: absolute;
    right: -4px;
    bottom: -4px;
    width: 7px;
    height: 7px;
    background: #267f4a;
    border: 1px solid #fff;
    border-width: 1px 0 0 1px;
    z-index: 2;
  }

  .cross {
    position: absolute;
    left: 198px;
    top: 64px;
  }

  .v-scroll {
    display: flex;
    flex-direction: column;
    width: 21px;
    margin: 2px 4px 0 4px;
    background: #dadada;
  }

  .v-scroll button {
    height: 21px;
    background: #fcfcfc;
    border: 1px solid #b5b5b5;
  }

  .v-scroll .thumb {
    height: 29%;
    background: #fcfcfc;
    border: 1px solid #b5b5b5;
  }

  .v-scroll .end {
    margin-top: auto;
  }

  .transfer {
    position: absolute;
    right: 0;
    top: 58px;
    display: flex;
    align-items: center;
    gap: 6px;
    width: 121px;
    height: 36px;
    overflow: hidden;
    border: 2px solid #6cb9df;
    border-width: 2px 0;
    background: linear-gradient(90deg, #d9f1fd, #a9dcf6);
    color: #587f9b;
    font-size: 16px;
    white-space: nowrap;
  }

  .cloud {
    display: flex;
    align-items: center;
    justify-content: center;
    flex: none;
    width: 42px;
    height: 36px;
    background: #2a99d9;
  }

  /* sheet tabs */
  .sheet-tabs {
    position: relative;
    display: flex;
    align-items: flex-start;
    height: 40px;
    padding-left: 18px;
    background: #e3e3e3;
    border-top: 2px solid #979797;
    border-bottom: 2px solid #cfcfcf;
  }

  .arrow {
    width: 40px;
    height: 34px;
  }

  .sheet-tab {
    height: 32px;
    padding: 0 17px;
    font-size: 18px;
  }

  .sheet-tab:not(.active) {
    margin-left: 40px;
    border-left: 1px solid #b0b0b0;
  }

  .sheet-tab.active {
    margin-top: -2px;
    height: 35px;
    background: #fff;
    border: 1px solid #aaa;
    border-top: none;
    border-bottom: 2px solid #267f4a;
    color: #267f4a;
    font-weight: 600;
  }

  .add {
    height: 36px;
    margin-left: 46px;
  }

  .h-area {
    display: flex;
    align-items: center;
    gap: 20px;
    width: 39%;
    margin: 7px 28px 0 auto;
  }

  .h-scroll {
    display: flex;
    flex: 1;
    height: 23px;
    background: #dadada;
  }

  .h-scroll button,
  .h-scroll .thumb {
    width: 22px;
    background: #fcfcfc;
    border: 2px solid #bdbdbd;
  }

  .h-scroll .thumb {
    flex: 1;
    margin: 0 33px 0 -2px;
  }

  .credit {
    position: absolute;
    left: 50%;
    top: 4px;
    transform: translateX(-50%);
    font-family: 'Liberation Serif', 'Noto Sans CJK SC', serif;
    font-size: 32px;
    line-height: 44px;
    color: #222;
    white-space: nowrap;
    z-index: 1;
  }

  /* status bar */
  .status {
    display: flex;
    align-items: center;
    height: 28px;
    padding: 0 11px 0 7px;
    background: #eeeeee;
    color: #555;
  }

  .macro {
    margin-left: 28px;
  }

  .views {
    display: flex;
    margin: 0 6px 0 auto;
  }

  .views button {
    width: 54px;
    height: 28px;
  }

  .views .on {
    background: #c9c9c9;
  }

  .step {
    width: 12px;
  }

  input[type='range'] {
    appearance: none;
    width: 138px;
    height: 20px;
    margin: 0 6px;
    background: linear-gradient(#b0b0b0, #b0b0b0) center / 100% 1px no-repeat;
  }

  input[type='range']::-webkit-slider-thumb {
    appearance: none;
    width: 7px;
    height: 16px;
    background: #666;
  }

  .zoom {
    width: 46px;
    margin-left: 22px;
  }
</style>
